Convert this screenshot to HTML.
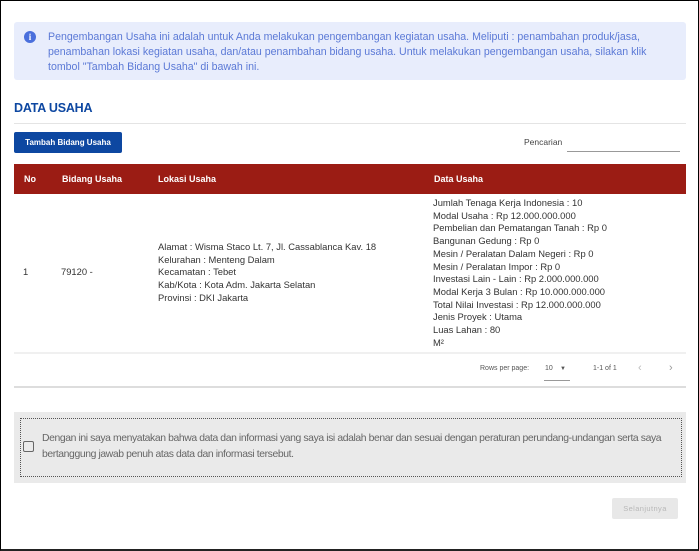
<!DOCTYPE html>
<html><head><meta charset="utf-8"><style>
*{box-sizing:border-box;margin:0;padding:0}
html,body{width:699px;height:551px;overflow:hidden;background:#fff;font-family:"Liberation Sans",sans-serif}
.frame{position:absolute;left:0;top:0;width:699px;height:551px;border:1px solid #000;border-bottom:2px solid #222}
.abs{position:absolute}
.info{left:14px;top:22px;width:672px;height:58px;background:#e8edfc;border-radius:3px}
.info .ic{position:absolute;left:10px;top:9px;width:12px;height:12px;border-radius:50%;background:#4a6fdc;color:#fff;font:bold 9px "Liberation Serif",serif;text-align:center;line-height:12px}
.info p{position:absolute;left:34px;top:8px;width:625px;font-size:10.6px;line-height:15px;color:#5b79d6}
.title{left:14px;top:101px;font-size:12.5px;font-weight:bold;color:#0d47a1;letter-spacing:-0.2px}
.hr{left:14px;top:123px;width:672px;height:1px;background:#e4e4e4}
.btn{left:14px;top:132px;width:108px;height:21px;background:#0d47a1;border-radius:2px;color:#fff;font-size:8px;font-weight:bold;text-align:center;line-height:21px}
.lbl{left:524px;top:137px;font-size:8.5px;color:#444}
.inp{left:567px;top:151px;width:113px;height:1px;background:#999}
.th{left:14px;top:164px;width:672px;height:30px;background:#9b1c14;color:#fff;font-size:9px;font-weight:bold}
.th span{position:absolute;top:10px}
.row{font-size:9.4px;color:#333;line-height:12.7px}
.sep{left:14px;top:352px;width:672px;height:2px;background:#f0f0f0}
.pg{top:365px;font-size:7px;color:#555}
.shadow{left:14px;top:386px;width:672px;height:2px;background:#ddd}
.agree{left:14px;top:412px;width:672px;height:71px;background:#eaeaea}
.dot{left:20px;top:418px;width:662px;height:59px;border:1px dotted #555}
.cb{left:23px;top:441px;width:11px;height:11px;border:1.5px solid #666;border-radius:2px}
.agree-t{left:42px;top:431px;width:640px;font-size:10.4px;line-height:15.5px;color:#666;letter-spacing:-0.4px}
.next{left:612px;top:498px;width:66px;height:21px;background:#e8e8e8;border-radius:2px;color:#b8b8b8;font-size:7.5px;text-align:center;line-height:21px;letter-spacing:0.4px}
</style></head><body>
<div class="abs info"><div class="ic">i</div><p>Pengembangan Usaha ini adalah untuk Anda melakukan pengembangan kegiatan usaha. Meliputi : penambahan produk/jasa,<br>penambahan lokasi kegiatan usaha, dan/atau penambahan bidang usaha. Untuk melakukan pengembangan usaha, silakan klik<br>tombol "Tambah Bidang Usaha" di bawah ini.</p></div>
<div class="abs title">DATA USAHA</div>
<div class="abs hr"></div>
<div class="abs btn">Tambah Bidang Usaha</div>
<div class="abs lbl">Pencarian</div>
<div class="abs inp"></div>
<div class="abs th"><span style="left:10px">No</span><span style="left:48px">Bidang Usaha</span><span style="left:144px">Lokasi Usaha</span><span style="left:420px">Data Usaha</span></div>
<div class="abs row" style="left:23px;top:266px">1</div>
<div class="abs row" style="left:61px;top:266px">79120 -</div>
<div class="abs row" style="left:158px;top:241px">Alamat : Wisma Staco Lt. 7, Jl. Cassablanca Kav. 18<br>Kelurahan : Menteng Dalam<br>Kecamatan : Tebet<br>Kab/Kota : Kota Adm. Jakarta Selatan<br>Provinsi : DKI Jakarta</div>
<div class="abs row" style="left:433px;top:197px">Jumlah Tenaga Kerja Indonesia : 10<br>Modal Usaha : Rp 12.000.000.000<br>Pembelian dan Pematangan Tanah : Rp 0<br>Bangunan Gedung : Rp 0<br>Mesin / Peralatan Dalam Negeri : Rp 0<br>Mesin / Peralatan Impor : Rp 0<br>Investasi Lain - Lain : Rp 2.000.000.000<br>Modal Kerja 3 Bulan : Rp 10.000.000.000<br>Total Nilai Investasi : Rp 12.000.000.000<br>Jenis Proyek : Utama<br>Luas Lahan : 80<br>M²</div>
<div class="abs sep"></div>
<div class="abs pg" style="left:480px">Rows per page:</div>
<div class="abs pg" style="left:545px">10</div>
<div class="abs pg" style="left:560px;font-size:6px;top:366px">▼</div>
<div class="abs" style="left:544px;top:380px;width:26px;height:1px;background:#999"></div>
<div class="abs pg" style="left:593px">1-1 of 1</div>
<div class="abs pg" style="left:638px;font-size:11px;top:362px;color:#bbb">‹</div>
<div class="abs pg" style="left:669px;font-size:11px;top:362px;color:#999">›</div>
<div class="abs shadow"></div>
<div class="abs agree"></div>
<div class="abs dot"></div>
<div class="abs cb"></div>
<div class="abs agree-t">Dengan ini saya menyatakan bahwa data dan informasi yang saya isi adalah benar dan sesuai dengan peraturan perundang-undangan serta saya<br>bertanggung jawab penuh atas data dan informasi tersebut.</div>
<div class="abs next">Selanjutnya</div>
<div class="frame"></div>
</body></html>
